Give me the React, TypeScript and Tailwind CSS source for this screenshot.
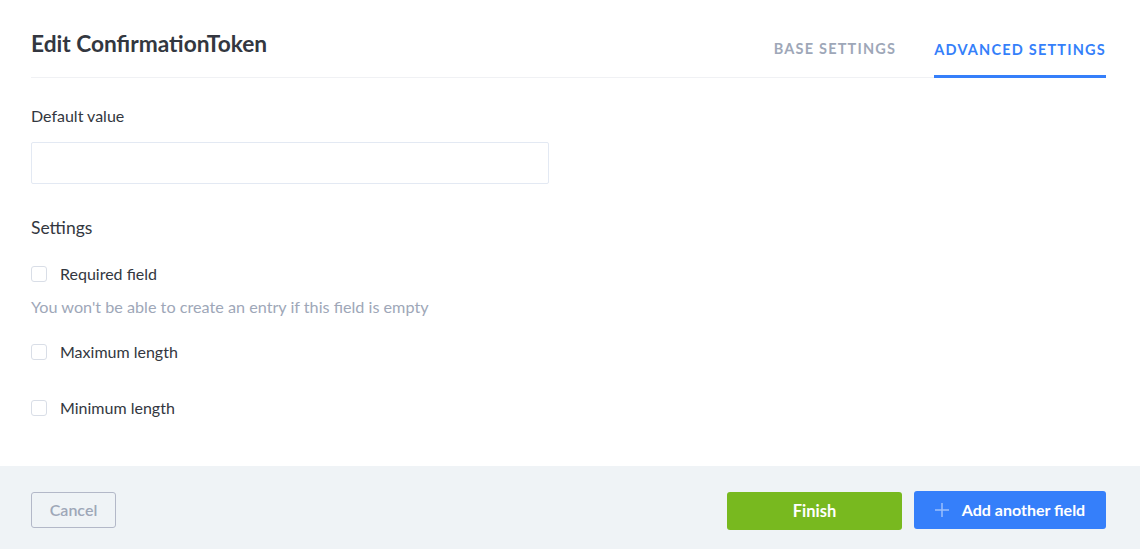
import React from "react";

function Checkbox({ label }: { label: string }) {
  return (
    <label className="flex items-center h-[20px]">
      <span className="w-[16px] h-[16px] border border-[#d9dee7] rounded-[3px] bg-white shrink-0" />
      <span className="ml-[13px] text-[16px] leading-[20px] text-[#333740]">{label}</span>
    </label>
  );
}

export default function App() {
  return (
    <div
      className="w-[1140px] h-[549px] bg-white flex flex-col"
      style={{ fontFamily: "Lato, 'Noto Sans', sans-serif" }}
    >
      <div className="flex-1 pl-[31px] pr-[34px]">
        <div className="flex justify-between items-start h-[78px] border-b border-[#f0f1f4]">
          <h1 className="mt-[30px] text-[22.7px] leading-[28px] font-bold text-[#333740]">
            Edit ConfirmationToken
          </h1>
          <div className="flex gap-[38px] h-full items-end">
            <div className="pb-[18px] text-[14.5px] leading-[20px] font-bold tracking-[1.2px] text-[#9ea7b8]">
              BASE SETTINGS
            </div>
            <div className="-mb-px pb-[15px] border-b-[3px] border-[#357ffa] text-[14.5px] leading-[20px] font-bold tracking-[1.2px] text-[#357ffa]">
              ADVANCED SETTINGS
            </div>
          </div>
        </div>
        <div className="pt-[28px]">
          <div className="text-[16px] leading-[20px] text-[#333740]">Default value</div>
          <div className="mt-[16px] w-[518px] h-[42px] border border-[#e3e9f3] rounded-[2px]" />
          <div className="mt-[33px] text-[17.5px] leading-[22px] text-[#333740]">Settings</div>
          <div className="mt-[25px]">
            <Checkbox label="Required field" />
          </div>
          <div className="mt-[13px] text-[16.2px] leading-[20px] text-[#9ea7b8]">
            You won't be able to create an entry if this field is empty
          </div>
          <div className="mt-[25px]">
            <Checkbox label="Maximum length" />
          </div>
          <div className="mt-[36px]">
            <Checkbox label="Minimum length" />
          </div>
        </div>
      </div>
      <div className="h-[83px] bg-[#eff3f6] pl-[31px] pr-[34px] pt-[25px] flex items-start justify-between">
        <button className="mt-[1px] w-[85px] h-[36px] border border-[#b3b8c8] rounded-[3px] text-[16px] font-semibold text-[#9ea7b8] bg-transparent">
          Cancel
        </button>
        <div className="flex gap-[12px] items-start">
          <button className="mt-[1px] w-[175px] h-[38px] rounded-[3px] bg-[#78b91f] text-white text-[16.5px] font-bold">
            Finish
          </button>
          <button className="w-[192px] h-[38px] rounded-[3px] bg-[#357ffa] text-white text-[16px] font-bold flex items-center justify-center gap-[13px]">
            <svg width="14" height="14" viewBox="0 0 14 14" className="opacity-50">
              <path d="M7 0v14M0 7h14" stroke="white" strokeWidth="1.5" />
            </svg>
            <span>Add another field</span>
          </button>
        </div>
      </div>
    </div>
  );
}
